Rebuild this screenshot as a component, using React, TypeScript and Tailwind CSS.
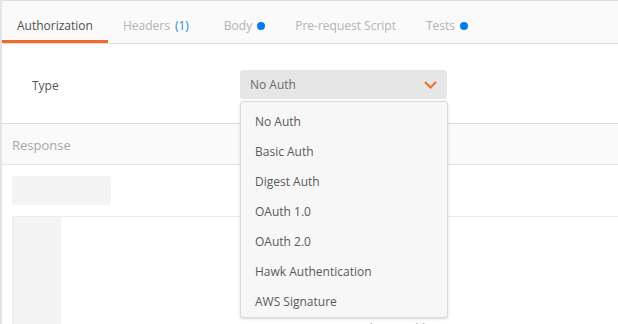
import React from "react";

const tabs = [
  { label: "Authorization", active: true },
  { label: "Headers", count: "(1)" },
  { label: "Body", dot: true },
  { label: "Pre-request Script" },
  { label: "Tests", dot: true },
];

const authTypes = [
  "No Auth",
  "Basic Auth",
  "Digest Auth",
  "OAuth 1.0",
  "OAuth 2.0",
  "Hawk Authentication",
  "AWS Signature",
];

export default function App() {
  return (
    <div
      className="relative h-[324px] w-[618px] overflow-hidden border-l-2 border-[#e4e4e4] bg-white text-[12px]"
      style={{ fontFamily: '"Open Sans", "Liberation Sans", sans-serif' }}
    >
      {/* tab bar */}
      <div className="flex h-[44px] items-stretch border-t border-b border-[#dedede] bg-[#fafafa]">
        {tabs.map((t) => (
          <div
            key={t.label}
            className={
              "flex items-center pl-[15px] pt-[10px] " +
              (t.count ? "pr-[20px] " : "pr-[15px] ") +
              (t.active ? "border-b-[3px] border-[#f26b2a] text-[#505050]" : "pb-[3px] text-[#b3b3b3]")
            }
          >
            <span>{t.label}</span>
            {t.count && <span className="ml-[5px] text-[#2f84e0]">{t.count}</span>}
            {t.dot && <span className="ml-[5px] h-[8px] w-[8px] rounded-full bg-[#097bed]" />}
          </div>
        ))}
      </div>

      {/* auth type row */}
      <div className="flex h-[80px] items-center border-b border-[#dcdcdc] pt-[1px]">
        <div className="w-[238px] pl-[30px] pt-[3px] text-[#555]">Type</div>
        <div className="flex h-[29px] w-[207px] items-center justify-between rounded-[3px] bg-[#e6e6e6] pl-[10px] pr-[10px] pt-[2px] text-[#6b6b6b]">
          <span>No Auth</span>
          <svg width="13" height="8" viewBox="0 0 13 8" fill="none">
            <polyline points="1,1 6.5,6.5 12,1" stroke="#f26b2a" strokeWidth="2" />
          </svg>
        </div>
      </div>

      {/* response header */}
      <div className="flex h-[41px] items-center border-b border-[#e6e6e6] bg-[#fafafa] pl-[10px] pt-[4px] text-[13px] text-[#a6a6a6]">
        Response
      </div>

      {/* response body placeholder */}
      <div className="pl-[10px] pt-[11px]">
        <div className="h-[29px] w-[99px] rounded-[3px] bg-[#f4f4f4]" />
        <div className="mt-[11px] flex h-[120px] border-t border-l border-[#ececec]">
          <div className="w-[48px] bg-[#f4f4f4]" />
          <div className="flex-1 pl-[283px] pt-[102px] text-[13px] text-[#9a9a9a]">Hit the Send button</div>
        </div>
      </div>

      {/* dropdown menu */}
      <div className="absolute left-[238px] top-[101px] h-[217px] w-[208px] rounded-[3px] border border-[#dadada] bg-[#f7f7f7] pt-[5px] shadow-[0_1px_3px_rgba(0,0,0,0.15)]">
        {authTypes.map((a) => (
          <div key={a} className="flex h-[30px] items-center px-[14px] text-[#5a5a5a]">
            {a}
          </div>
        ))}
      </div>
    </div>
  );
}
